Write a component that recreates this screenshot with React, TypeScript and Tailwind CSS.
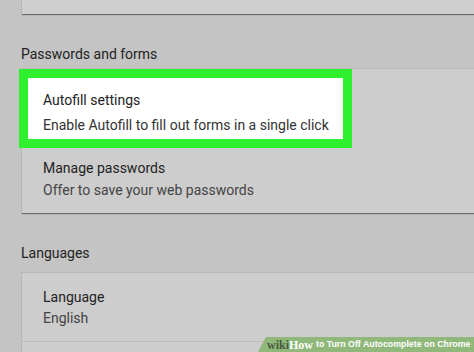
import React from 'react';

function Watermark() {
  return (
    <div className="absolute right-0 bottom-0 h-[15px] w-[216px]">
      <svg className="absolute inset-0" width="216" height="15" viewBox="0 0 216 15">
        <polygon points="8,0 216,0 216,15 0,15" fill="#8fb87a" />
      </svg>
      <div className="relative flex items-center h-full pl-[9px] leading-none whitespace-nowrap">
        <span className="font-['Liberation_Serif',serif] font-bold text-[#4a5a40] text-[12px]">wiki</span>
        <span className="font-['Liberation_Serif',serif] font-bold text-white text-[12px]">How</span>
        <span className="ml-[3px] font-['Liberation_Sans',sans-serif] font-bold text-white text-[8.8px]">
          to Turn Off Autocomplete on Chrome
        </span>
      </div>
    </div>
  );
}

export default function App() {
  return (
    <div className="relative w-[474px] h-[352px] overflow-hidden bg-[#c4c4c4] font-['Roboto',sans-serif] text-[#222]">
      <div className="ml-[22px] h-[14px] bg-[#cfcfcf] shadow-[0_1px_1px_rgba(0,0,0,0.45)]" />

      <div className="ml-[21px] mt-[31px] h-[18px] flex items-center text-[14px]">Passwords and forms</div>

      <div className="ml-[22px] mt-[12px] bg-[#cdcdcd] shadow-[0_1px_1px_rgba(0,0,0,0.45),0_-1px_0_rgba(0,0,0,0.06)]">
        <div className="-ml-[3px] -mt-[6px] w-[333px] h-[79px] border-[9px] border-[#2ef02e] bg-white pl-[15px] pt-[13px]">
          <div className="h-[18px] flex items-center text-[14px]">Autofill settings</div>
          <div className="mt-[7px] h-[18px] flex items-center text-[14px] text-[#333]">
            Enable Autofill to fill out forms in a single click
          </div>
        </div>
        <div className="pl-[21px] pt-[11px] pb-[14px]">
          <div className="h-[18px] flex items-center text-[14px]">Manage passwords</div>
          <div className="mt-[4px] h-[18px] flex items-center text-[14px] text-[#444]">
            Offer to save your web passwords
          </div>
        </div>
      </div>

      <div className="ml-[21px] mt-[31px] h-[18px] flex items-center text-[14px]">Languages</div>

      <div className="ml-[21px] mt-[11px] bg-[#cdcdcd] border-l border-[#b8b8b8] shadow-[0_-1px_0_rgba(0,0,0,0.06)]">
        <div className="pl-[21px] pt-[15px] pb-[14px] border-b border-[#bcbcbc]">
          <div className="h-[18px] flex items-center text-[14px]">Language</div>
          <div className="mt-[3px] h-[18px] flex items-center text-[14px] text-[#444]">English</div>
        </div>
        <div className="h-[20px]" />
      </div>

      <Watermark />
    </div>
  );
}
